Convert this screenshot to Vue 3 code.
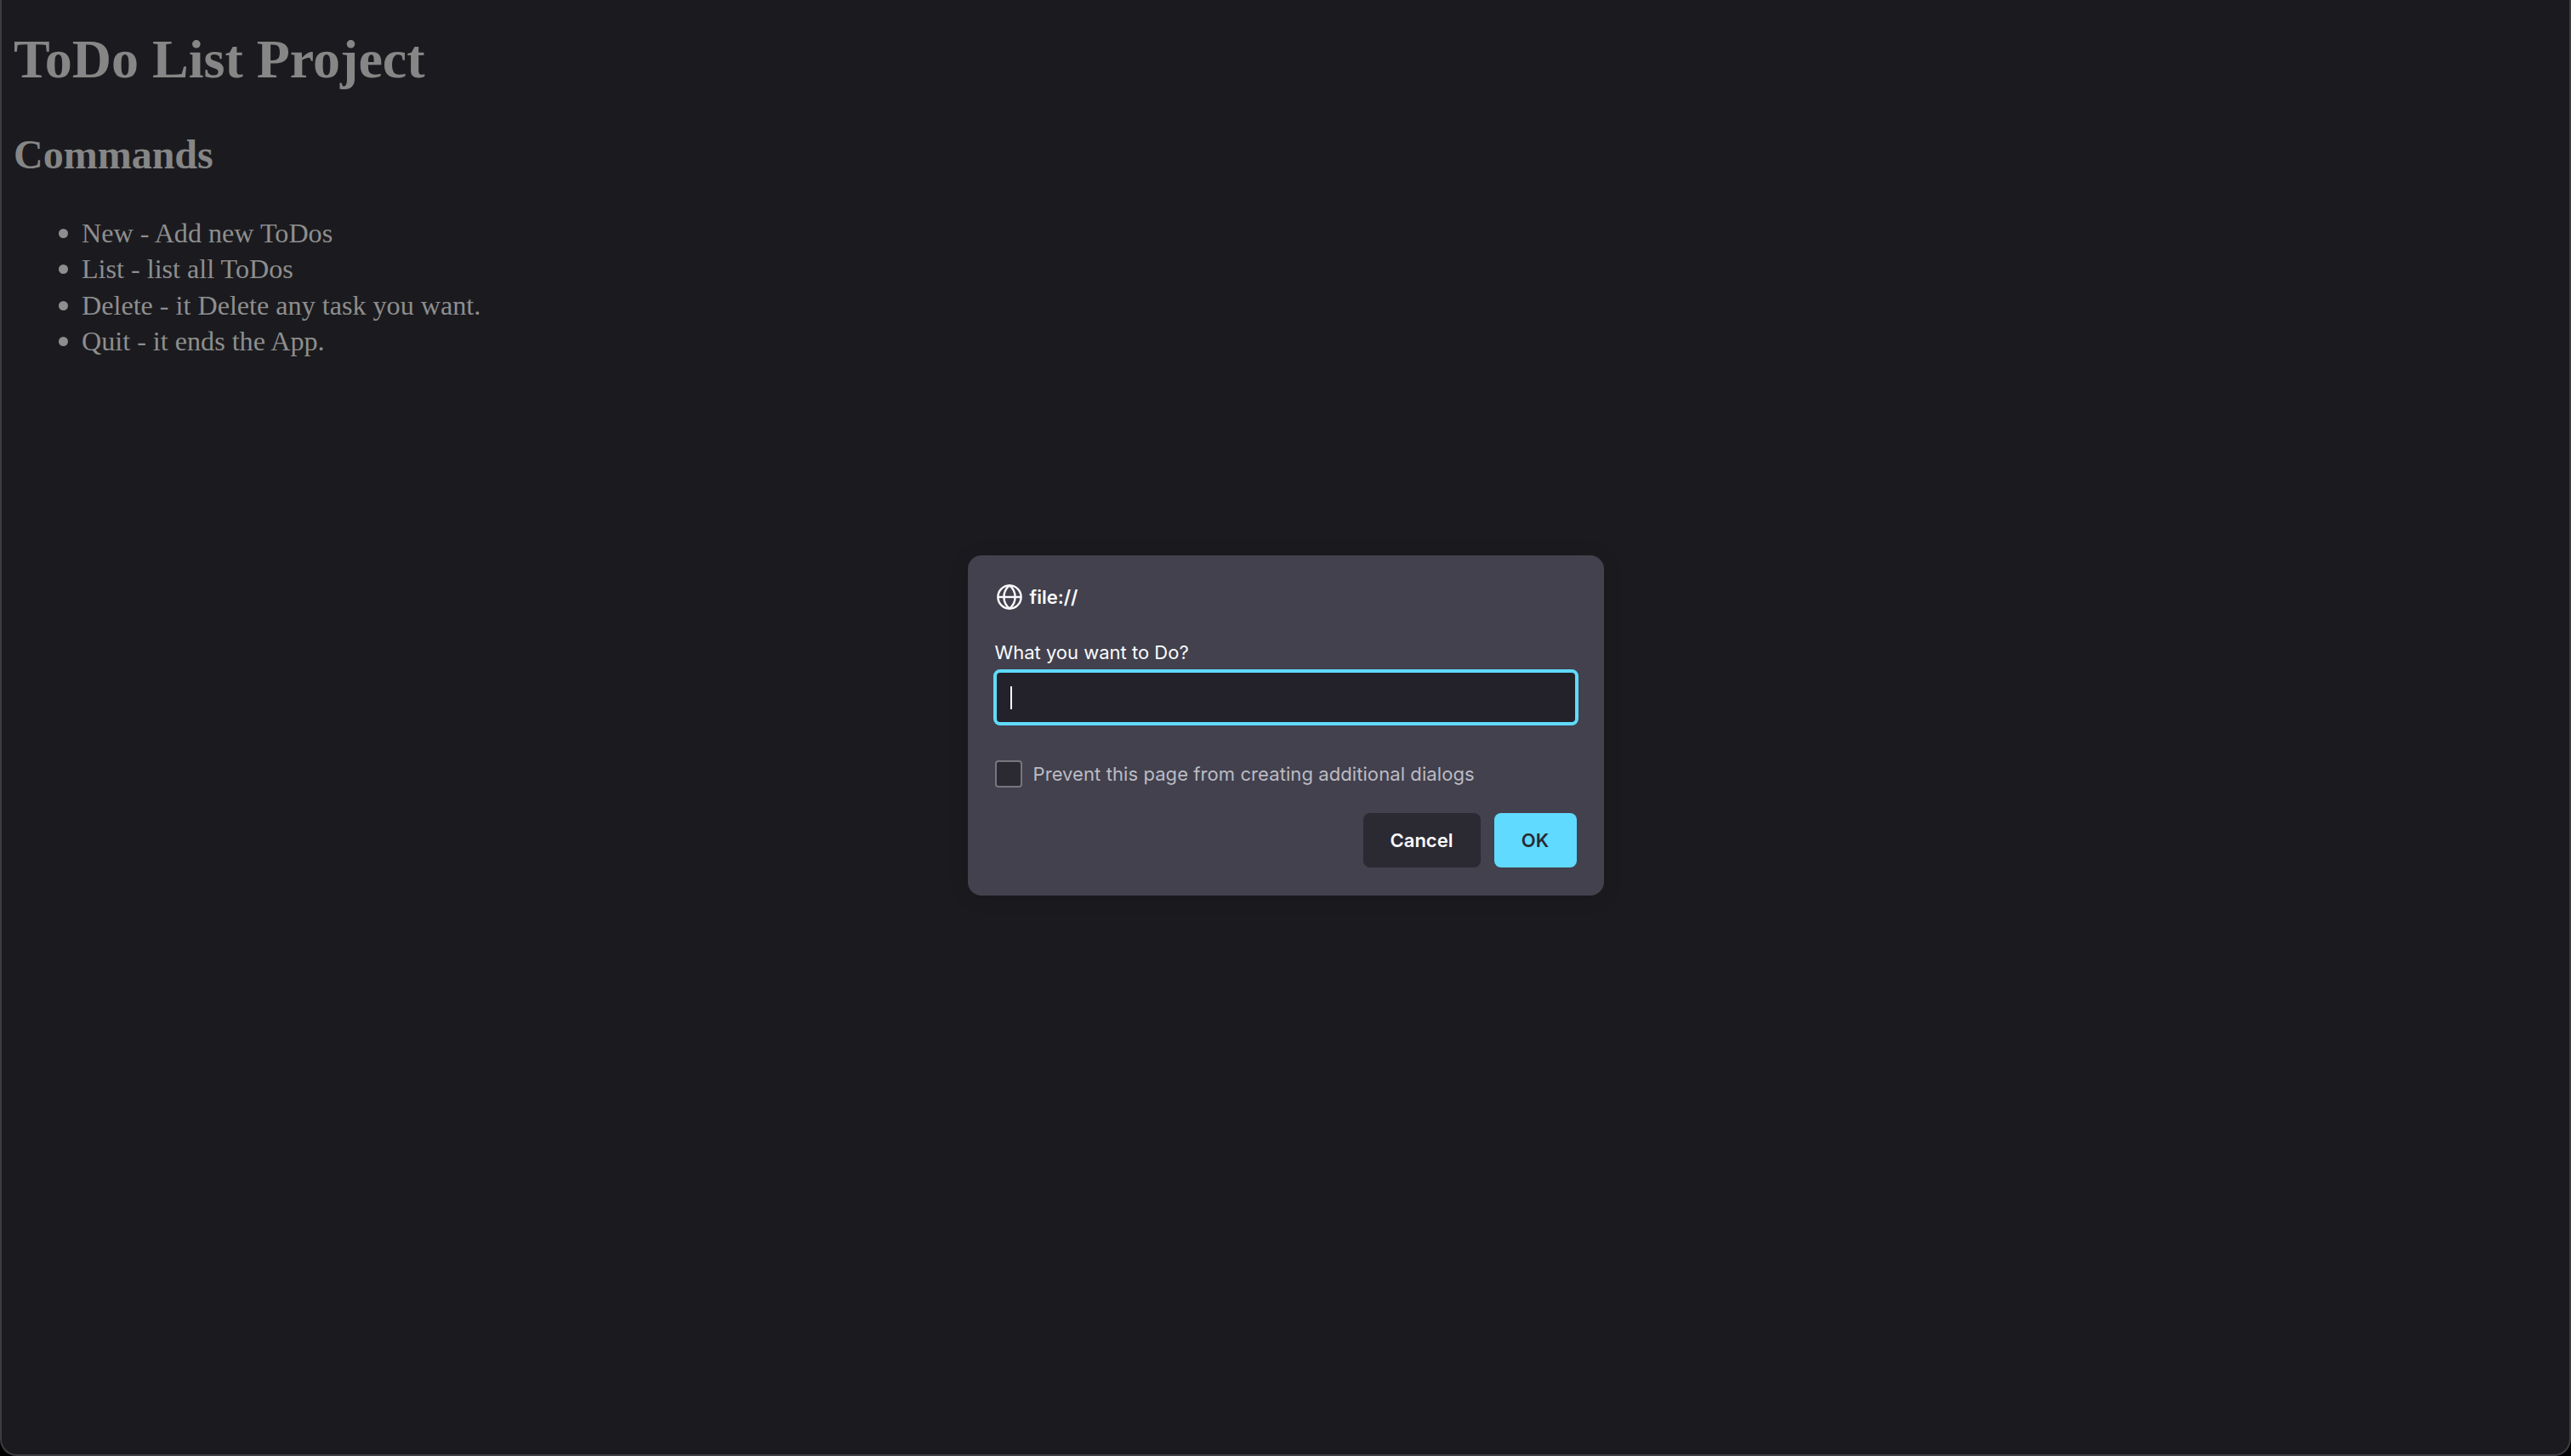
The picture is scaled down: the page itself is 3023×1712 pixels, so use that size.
<template>
  <div class="page">
    <h1 class="title">ToDo List Project</h1>
    <h2 class="subtitle">Commands</h2>
    <ul class="commands">
      <li v-for="cmd in commands" :key="cmd"><span class="dot"></span>{{ cmd }}</li>
    </ul>

    <div class="overlay">
      <div class="dialog">
        <div class="origin">
          <svg class="globe" viewBox="0 0 30 30" fill="none" stroke="currentColor" stroke-width="2.4">
            <circle cx="15" cy="15" r="13.6" />
            <path d="M1.5 15h27" />
            <path d="M15 1.4C10.6 5 8.4 9.8 8.4 15s2.2 10 6.6 13.6C19.4 25 21.6 20.2 21.6 15S19.4 5 15 1.4z" />
          </svg>
          <span>file://</span>
        </div>
        <div class="prompt">What you want to Do?</div>
        <div class="field"><span class="caret"></span></div>
        <div class="check-row">
          <span class="checkbox"></span>
          <span class="check-label">Prevent this page from creating additional dialogs</span>
        </div>
        <div class="actions">
          <button class="btn cancel">Cancel</button>
          <button class="btn ok">OK</button>
        </div>
      </div>
    </div>
  </div>
</template>

<script setup>
const commands = [
  'New - Add new ToDos',
  'List - list all ToDos',
  'Delete - it Delete any task you want.',
  'Quit - it ends the App.',
];
</script>

<style>
html,
body {
  margin: 0;
  background: #000;
}
</style>

<style scoped>
.page {
  position: relative;
  box-sizing: border-box;
  height: 1712px;
  padding: 33px 14px 0 14px;
  background: #1b1b1f;
  color: #868686;
  font-family: "Liberation Serif", serif;
  border-left: 2px solid #3d3d40;
  border-bottom: 2px solid #3d3d40;
  border-right: 2px solid #3d3d40;
  border-radius: 0 0 20px 20px;
  overflow: hidden;
}

.title {
  margin: 0;
  font-size: 64px;
  line-height: 74px;
  font-weight: 700;
}

.subtitle {
  margin: 47px 0 0;
  font-size: 48px;
  line-height: 55px;
  font-weight: 700;
}

.commands {
  margin: 44px 0 0;
  padding-left: 52.5px;
  list-style: none;
  font-size: 32.13px;
  line-height: 42.4px;
  color: #8e8e8e;
}

.commands li {
  display: flex;
  align-items: center;
  gap: 16.5px;
}

.dot {
  width: 11px;
  height: 11px;
  border-radius: 50%;
  background: currentColor;
}

.overlay {
  position: absolute;
  inset: 0;
  display: flex;
  align-items: center;
  justify-content: center;
  padding-bottom: 4px;
  box-sizing: border-box;
}

.dialog {
  box-sizing: border-box;
  width: 748px;
  height: 400px;
  padding: 32px;
  background: #42414d;
  border-radius: 16px;
  box-shadow: 0 2px 24px rgba(0, 0, 0, 0.1);
  color: #fbfbfe;
  font-family: Inter, sans-serif;
}

.origin {
  display: flex;
  align-items: center;
  gap: 9px;
  height: 34px;
  font-size: 22px;
  font-weight: 600;
}

.globe {
  width: 30px;
  height: 30px;
  margin-left: 2px;
}

.prompt {
  margin-top: 34px;
  font-size: 22px;
  line-height: 28px;
}

.field {
  display: flex;
  align-items: center;
  box-sizing: border-box;
  width: 688px;
  height: 66px;
  margin: 6px 0 0 -2px;
  padding-left: 16px;
  background: #23222b;
  border: 4px solid #5fdbfb;
  border-radius: 8px;
}

.caret {
  width: 2px;
  height: 27px;
  background: #fbfbfe;
}

.check-row {
  display: flex;
  align-items: center;
  gap: 13px;
  margin-top: 41px;
}

.checkbox {
  box-sizing: border-box;
  width: 32px;
  height: 32px;
  background: #2b2a33;
  border: 2px solid #77767e;
  border-radius: 4px;
}

.check-label {
  font-size: 22px;
  letter-spacing: 0.08px;
  color: #bcbbc4;
}

.actions {
  display: flex;
  justify-content: flex-end;
  gap: 16px;
  margin-top: 30px;
}

.btn {
  height: 64px;
  border: none;
  border-radius: 8px;
  font-family: Inter, sans-serif;
  font-size: 22px;
  font-weight: 600;
}

.cancel {
  width: 138px;
  background: #2b2a33;
  color: #fbfbfe;
}

.ok {
  width: 97px;
  background: #60dbff;
  color: #2b2a33;
}
</style>
